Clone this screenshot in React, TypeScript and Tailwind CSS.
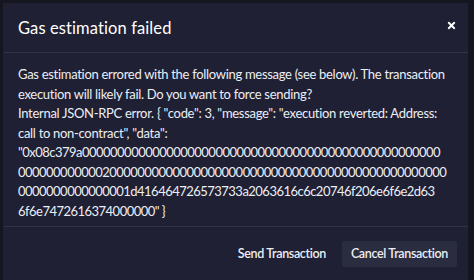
import { FaTimes } from 'react-icons/fa';

const proseLines = [
  'Gas estimation errored with the following message (see below). The transaction',
  'execution will likely fail. Do you want to force sending?',
  'Internal JSON-RPC error. { "code": 3, "message": "execution reverted: Address:',
  'call to non-contract", "data":',
];

const hexLines = [
  '"0x08c379a000000000000000000000000000000000000000000000000000',
  '0000000000002000000000000000000000000000000000000000000000000',
  '0000000000000001d416464726573733a2063616c6c20746f206e6f6e2d63',
  '6f6e7472616374000000" }',
];

export default function App() {
  return (
    <div className="h-[280px] w-[474px] overflow-hidden bg-[#15161f] pl-[3px] pt-[3px] font-['Lato',sans-serif] text-white">
      <div className="w-[465px] h-[300px] bg-[#1f2033]">
        {/* header */}
        <div className="flex h-[50px] items-center justify-between border-b border-[#30324a] pl-[15px] pr-[11px]">
          <h2 className="text-[16.5px] tracking-[0.1px] pt-[2px]">Gas estimation failed</h2>
          <button className="mb-[5px] text-white">
            <FaTimes className="h-[11px] w-[11px]" />
          </button>
        </div>

        {/* body */}
        <div className="h-[173px] pl-[15px] pr-[12px] pt-[12px] text-[13px] leading-[19.5px] text-[#eceef5]">
          {proseLines.map((l) => (
            <div key={l} className="whitespace-nowrap tracking-[-0.3px]">{l}</div>
          ))}
          {hexLines.map((l) => (
            <div key={l} className="whitespace-nowrap tracking-[-0.52px]">{l}</div>
          ))}
        </div>

        {/* footer */}
        <div className="flex justify-end gap-[7px] border-t border-[#30324a] pr-[11px] pt-[14px]">
          <button className="h-[26px] px-[9px] text-[12.5px] tracking-[-0.35px] font-semibold text-[#eceef5]">Send Transaction</button>
          <button className="h-[26px] rounded-[2px] bg-[#2a2c40] px-[9px] text-[12.5px] tracking-[-0.35px] font-semibold text-[#eceef5]">
            Cancel Transaction
          </button>
        </div>
      </div>
    </div>
  );
}
